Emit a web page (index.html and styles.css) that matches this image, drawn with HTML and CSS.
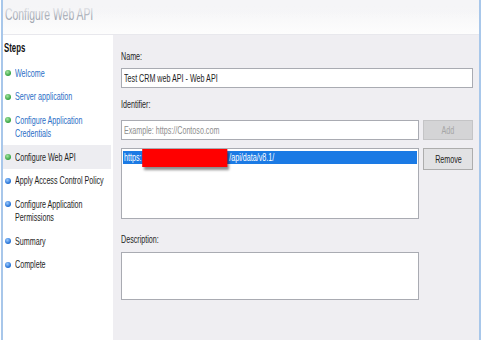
FILE: index.html
```html
<!DOCTYPE html>
<html>
  <head>
    <meta charset="utf-8">
    <title>Configure Web API</title>
    <link rel="stylesheet" href="styles.css">
  </head>
  <body>
    <div class="window">

      <div class="titlebar">
        <span class="t title">Configure Web API</span>
      </div>

      <div class="main">
        <!-- wizard steps -->
        <div class="steps">
          <div class="steps-head"><span class="t">Steps</span></div>
          <ul class="step-list">
            <li class="step done"><span class="dot"></span><span class="t">Welcome</span></li>
            <li class="step done"><span class="dot"></span><span class="t">Server application</span></li>
            <li class="step done"><span class="dot"></span><span class="t">Configure Application<br/>Credentials</span></li>
            <li class="step current"><span class="dot"></span><span class="t">Configure Web API</span></li>
            <li class="step todo"><span class="dot"></span><span class="t">Apply Access Control Policy</span></li>
            <li class="step todo"><span class="dot"></span><span class="t">Configure Application<br/>Permissions</span></li>
            <li class="step todo"><span class="dot"></span><span class="t">Summary</span></li>
            <li class="step todo"><span class="dot"></span><span class="t">Complete</span></li>
          </ul>
        </div>

        <!-- form -->
        <div class="pane">
          <div class="label"><span class="t">Name:</span></div>
          <div class="textbox name-box"><span class="t">Test CRM web API - Web API</span></div>

          <div class="label label-identifier"><span class="t">Identifier:</span></div>
          <div class="row">
            <div class="textbox id-box placeholder"><span class="t">Example: https://Contoso.com</span></div>
            <div class="button disabled"><span class="t">Add</span></div>
          </div>

          <div class="row row-list">
            <div class="listbox">
              <div class="list-item selected"><span class="t">https:<span class="redact"></span>/api/data/v8.1/</span></div>
            </div>
            <div class="button remove"><span class="t">Remove</span></div>
          </div>

          <div class="label label-description"><span class="t">Description:</span></div>
          <div class="textbox desc-box"></div>
        </div>
      </div>

    </div>
  </body>
</html>
```

FILE: styles.css
```css
html,body{
  margin: 0px;
  padding: 0px;
  height: 100%;
  overflow: hidden;
  background-color: #FFF;
  font-family: "Liberation Sans", Arial, sans-serif;
  font-size: 11px;
  color: #1E1E1E;
}

/* the capture is squeezed horizontally, so is every text run */
.t{
  display: inline-block;
  white-space: nowrap;
  transform: scaleX(0.65);
  transform-origin: 0 50%;
}

.window{
  width: 480px;
  height: 340px;
  margin-left: 1px;
  box-sizing: border-box;
  border-left: solid 2px #A8C7EA;
  border-right: solid 2px #A8C7EA;
  display: flex;
  flex-direction: column;
}

.titlebar{
  position: relative;
  height: 35px;
  box-sizing: border-box;
  padding: 5px 0px 0px 2px;
  border-bottom: solid 1px #E8E8ED;
  background: linear-gradient(#F3F3F5, #FDFDFD);
}

.title{
  font-size: 16px;
  line-height: 20px;
  color: #A3A9B3;
}

.titlebar::after{
  content: "";
  position: absolute;
  left: 0px;
  right: 0px;
  top: 0px;
  height: 17px;
  background: linear-gradient(rgba(245,245,247,1) 30%, rgba(245,245,247,0));
}

.main{
  flex: 1;
  display: flex;
  min-height: 0;
}

.steps{
  width: 110px;
  flex: none;
  background-color: #FFF;
}

.steps-head{
  height: 26px;
  line-height: 26px;
  padding-left: 1px;
  font-size: 12px;
  font-weight: bold;
  color: #111;
}

.step-list{
  list-style: none;
  margin: 0px;
  padding: 0px;
}

.step{
  display: flex;
  align-items: flex-start;
  margin-right: 2px;
  padding: 5.5px 0px 5.2px 2px;
  line-height: 13px;
}

.dot{
  flex: none;
  width: 6px;
  height: 6px;
  margin-top: 3.5px;
  margin-right: 4px;
  border-radius: 50%;
}

.done .dot, .current .dot{
  background: radial-gradient(circle at 40% 35%, #A6E6A2, #3AA545 65%);
}

.todo .dot{
  background: radial-gradient(circle at 40% 35%, #9CCBFF, #2572D6 65%);
}

.done .t{
  color: #2A6EC6;
}

.current{
  background-color: #EDEDF1;
}

.pane{
  flex: 1;
  background-color: #EFEEF2;
  padding: 14.5px 0px 0px 8px;
}

.label{
  line-height: 13px;
  margin-bottom: 5px;
}

.label-identifier{
  margin-top: 10px;
  margin-bottom: 9.5px;
}

.label-description{
  margin-top: 13.5px;
  margin-bottom: 6.5px;
}

.textbox{
  box-sizing: border-box;
  height: 20px;
  line-height: 18px;
  padding-left: 2px;
  border: solid 1px #A9ABB2;
  background-color: #FFF;
  overflow: hidden;
}

.name-box{
  width: 352px;
}

.id-box{
  width: 298px;
}

.placeholder{
  color: #8E8E8E;
}

.desc-box{
  width: 298px;
  height: 48px;
}

.row{
  display: flex;
  align-items: flex-start;
  gap: 4px;
}

.row-list{
  margin-top: 8px;
}

.button{
  box-sizing: border-box;
  width: 50px;
  height: 20px;
  line-height: 18px;
  text-align: center;
  border: solid 1px #C4C4C6;
  background-color: #D4D4D6;
  color: #A6A6A6;
}

.button .t{
  transform-origin: 50% 50%;
}

.remove{
  height: 22px;
  line-height: 20px;
  border-color: #ADADAD;
  background-color: #E2E2E4;
  color: #222;
}

.listbox{
  box-sizing: border-box;
  width: 298px;
  height: 71px;
  padding: 2px 1px;
  border: solid 1px #A9ABB2;
  background-color: #FFF;
}

.list-item{
  height: 13px;
  line-height: 13px;
  padding-left: 1px;
}

.selected{
  background-color: #1B7AE4;
  color: #FFF;
}

.redact{
  display: inline-block;
  vertical-align: top;
  width: 131px;
  height: 18px;
  margin: -2px 3px -3px 1px;
  background-color: #FF0000;
  box-shadow: 3px 3px 3px rgba(0,0,0,0.45);
}
```
